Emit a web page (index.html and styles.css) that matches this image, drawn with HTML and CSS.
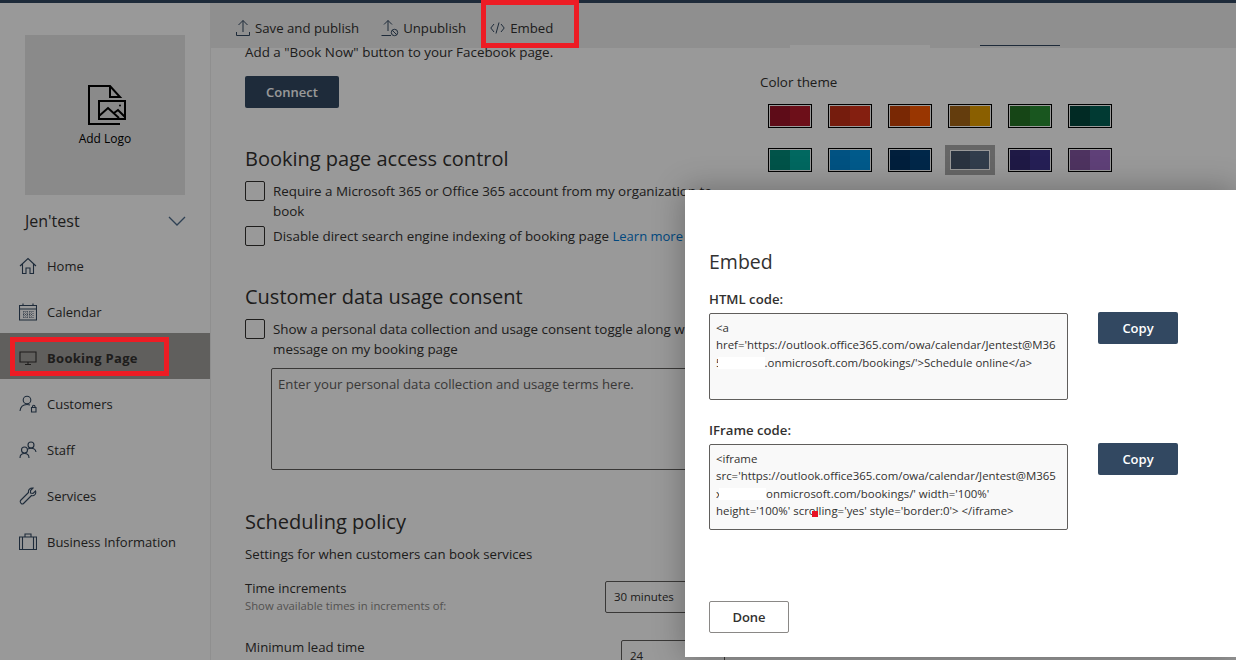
FILE: index.html
```html
<!DOCTYPE html>
<html lang="en">
<head>
    <meta charset="UTF-8">
    <title>Bookings - Booking Page</title>
    <link rel="stylesheet" href="styles.css">
</head>
<body>
    <div class="topbar"></div>
    <div class="app">
        <aside class="sidebar">
            <div class="logo-box">
                <svg class="logo-icon" width="40" height="42" viewBox="0 0 40 42" fill="none" stroke="#000" stroke-width="2">
                    <path d="M32 39H1V1H22L32 12H22V1"/>
                    <path d="M11 16H37V34H11Z" fill="#e4e4e4"/>
                    <path d="M11 31L20 23L31 33M26 28L30 25L37 32"/>
                    <circle cx="32" cy="20.500" r="1" fill="#000" stroke="none"/>
                </svg>
                <span>Add Logo</span>
            </div>
            <div class="business-name">
                <span>Jen'test</span>
                <svg width="18" height="10" viewBox="0 0 18 10" fill="none" stroke="#4d6c8c" stroke-width="1.300"><path d="M1 1L9 9L17 1"/></svg>
            </div>
            <nav class="nav">
                <a class="nav-item">
                    <svg width="18" height="18" viewBox="0 0 18 18" fill="none" stroke="#324861" stroke-width="1.100"><path d="M1 9L9 1.500L17 9M3.500 7V16.500H7V11H11V16.500H14.500V7"/></svg>
                    Home
                </a>
                <a class="nav-item">
                    <svg width="18" height="18" viewBox="0 0 18 18" fill="none" stroke="#324861" stroke-width="1.100"><path d="M.5 2.500H17.500V17H.5ZM.5 6H17.500M4 .5V3M14 .5V3"/><path d="M4 9H14M4 11.500H14M4 14H14M5 8V15M8 8V15M11 8V15M14 8V15" stroke-width=".8" stroke-dasharray="1 1"/></svg>
                    Calendar
                </a>
                <a class="nav-item active">
                    <svg width="18" height="18" viewBox="0 0 18 18" fill="none" stroke="#323130" stroke-width="1.100"><path d="M1 3H17V13H1ZM6 15.500H12M9 13V15.500"/></svg>
                    Booking Page
                </a>
                <a class="nav-item">
                    <svg width="18" height="18" viewBox="0 0 18 18" fill="none" stroke="#324861" stroke-width="1.100"><circle cx="8" cy="5" r="3.800"/><path d="M1 16C1.500 11.500 4 9.500 8 9.500C9 9.500 10 9.700 11 10"/><path d="M12.500 12.500H17V17H12.500ZM13.500 12.500V11.500C13.500 9.800 16 9.800 16 11.500V12.500"/></svg>
                    Customers
                </a>
                <a class="nav-item">
                    <svg width="18" height="18" viewBox="0 0 18 18" fill="none" stroke="#324861" stroke-width="1.100"><circle cx="12" cy="4" r="3"/><circle cx="5.500" cy="9" r="3"/><path d="M1 17C1 14 3 12.500 5.500 12.500C8 12.500 10 14 10 17M9 8C10 7.500 11 7.300 12 7.300C14.500 7.300 16.500 8.500 17 11"/></svg>
                    Staff
                </a>
                <a class="nav-item">
                    <svg width="18" height="18" viewBox="0 0 18 18" fill="none" stroke="#324861" stroke-width="1.100"><path d="M1.500 13.500L9.500 5.500C9 3 11 .5 14 1L11.500 3.500V6L14 6.500L16.500 4C17.500 7 15 9.500 12.500 8.500L4.500 16.500C3 18 .5 15.500 1.500 13.500Z"/></svg>
                    Services
                </a>
                <a class="nav-item">
                    <svg width="18" height="18" viewBox="0 0 18 18" fill="none" stroke="#324861" stroke-width="1.100"><path d="M.5 4H17.500V16.500H.5ZM6 4V1H12V4M3.500 4V16.500M14.500 4V16.500"/></svg>
                    Business Information
                </a>
            </nav>
        </aside>

        <main class="main">
            <div class="toolbar">
                <a class="tool tool-save">
                    <svg width="14" height="18" viewBox="0 0 14 18" fill="none" stroke="#324861" stroke-width="1"><path d="M7 13V1.500M2.500 6L7 1.500L11.500 6M.5 13V16.500H13.500V13"/></svg>
                    Save and publish
                </a>
                <a class="tool tool-unpublish">
                    <svg width="18" height="18" viewBox="0 0 18 18" fill="none" stroke="#324861" stroke-width="1"><path d="M7 12V1.500M3 5.500L7 1.500L11 5.500M.5 16.500H10"/><circle cx="13.500" cy="13.500" r="3.200"/><path d="M11.300 11.300L15.700 15.700"/></svg>
                    Unpublish
                </a>
                <a class="tool tool-embed">
                    <svg width="15" height="12" viewBox="0 0 15 12" fill="none" stroke="#324861" stroke-width="1"><path d="M4 2L.8 6L4 10M11 2L14.200 6L11 10M9 .5L6 11.500"/></svg>
                    Embed
                </a>
                <span class="tab-light"></span>
                <span class="tab-line"></span>
            </div>

            <div class="content">
                <div class="col-left">
                    <p class="line">Add a "Book Now" button to your Facebook page.</p>
                    <button class="btn-primary btn-connect">Connect</button>

                    <h2 class="heading heading-first">Booking page access control</h2>
                    <label class="check-row check-first"><span class="checkbox"></span><span>Require a Microsoft 365 or Office 365 account from my organization to book</span></label>
                    <label class="check-row check-second"><span class="checkbox"></span><span>Disable direct search engine indexing of booking page <a class="link">Learn more</a></span></label>

                    <h2 class="heading heading-consent">Customer data usage consent</h2>
                    <label class="check-row check-consent"><span class="checkbox"></span><span>Show a personal data collection and usage consent toggle along with a message on my booking page</span></label>
                    <div class="terms">Enter your personal data collection and usage terms here.</div>

                    <h2 class="heading heading-policy">Scheduling policy</h2>
                    <p class="line policy-note">Settings for when customers can book services</p>

                    <div class="field field-time">
                        <div class="field-label">
                            <div>Time increments</div>
                            <div class="field-sub">Show available times in increments of:</div>
                        </div>
                        <div class="select">30 minutes</div>
                    </div>
                    <div class="field field-lead">
                        <div class="field-label">Minimum lead time</div>
                        <div class="select select-lead">24</div>
                    </div>
                </div>

                <div class="col-right">
                    <div class="theme-title">Color theme</div>
                    <div class="swatches">
                        <span class="swatch"><i style="background:#9d1428"></i><i style="background:#b6192b"></i></span>
                        <span class="swatch"><i style="background:#c43017"></i><i style="background:#dc351b"></i></span>
                        <span class="swatch"><i style="background:#ca4408"></i><i style="background:#ff5a03"></i></span>
                        <span class="swatch"><i style="background:#a76716"></i><i style="background:#e69e00"></i></span>
                        <span class="swatch"><i style="background:#257325"></i><i style="background:#2b8f34"></i></span>
                        <span class="swatch"><i style="background:#02463c"></i><i style="background:#026255"></i></span>
                        <span class="swatch"><i style="background:#038a7b"></i><i style="background:#03ada0"></i></span>
                        <span class="swatch"><i style="background:#0289d9"></i><i style="background:#0096e8"></i></span>
                        <span class="swatch"><i style="background:#023464"></i><i style="background:#00417b"></i></span>
                        <span class="swatch selected"><i style="background:#46556b"></i><i style="background:#53667f"></i></span>
                        <span class="swatch"><i style="background:#342b73"></i><i style="background:#3f348e"></i></span>
                        <span class="swatch"><i style="background:#8255a0"></i><i style="background:#9e6bc8"></i></span>
                    </div>
                </div>
            </div>
        </main>
    </div>

    <div class="dim"></div>

    <div class="note-box note-embed"></div>
    <div class="note-box note-booking"></div>

    <section class="dialog">
        <h2 class="dialog-title">Embed</h2>

        <div class="code-label">HTML code:</div>
        <div class="code-row">
            <div class="code-box">&lt;a<br>href='https://outlook.office365.com/owa/calendar/Jentest@M36<br>5<span class="redact"></span>.onmicrosoft.com/bookings/'&gt;Schedule online&lt;/a&gt;</div>
            <button class="btn-primary btn-copy">Copy</button>
        </div>

        <div class="code-label code-label-second">IFrame code:</div>
        <div class="code-row">
            <div class="code-box code-box-second">&lt;iframe<br>src='https://outlook.office365.com/owa/calendar/Jentest@M365<br>x<span class="redact redact-second"></span>onmicrosoft.com/bookings/' width='100%'<br>height='100%' scrolling='yes' style='border:0'&gt; &lt;/iframe&gt;<span class="red-dot"></span></div>
            <button class="btn-primary btn-copy">Copy</button>
        </div>

        <button class="btn-done">Done</button>
    </section>
</body>
</html>
```

FILE: styles.css
```css
* {
    box-sizing: border-box;
}
html, body {
    height: 100%;
}
body {
    margin: 0;
    height: 660px;
    overflow: hidden;
    position: relative;
    font-family: "Open Sans", "Noto Sans", sans-serif;
    font-size: 13.400px;
    line-height: 20px;
    color: #323130;
    background: #fff;
}
p, h2 {
    margin: 0;
}
button {
    font-family: inherit;
}

.topbar {
    height: 3px;
    background: #324861;
}
.app {
    display: flex;
    height: 657px;
}

/* sidebar */
.sidebar {
    width: 211px;
    flex: none;
    padding-top: 32px;
    border-right: 1px solid #eee;
}
.logo-box {
    width: 160px;
    height: 160px;
    margin-left: 25px;
    background: #e6e6e6;
    display: flex;
    flex-direction: column;
    align-items: center;
    padding-top: 50px;
    font-size: 12px;
    color: #000;
}
.logo-icon {
    margin-left: 6px;
    margin-bottom: 2px;
}
.business-name {
    display: flex;
    justify-content: space-between;
    align-items: center;
    height: 24px;
    margin: 14px 24px 0 25px;
    font-size: 16px;
}
.nav {
    margin-top: 8px;
}
.nav-item {
    display: flex;
    align-items: center;
    gap: 10px;
    height: 46px;
    padding: 4px 0 0 19px;
    font-size: 13px;
    color: #323130;
}
.nav-item.active {
    background: #a19e9b;
    font-weight: 700;
    letter-spacing: 0.3px;
}

/* toolbar */
.main {
    flex: 1;
    min-width: 0;
}
.toolbar {
    display: flex;
    align-items: center;
    height: 45px;
    padding: 4px 0 0 25px;
    background: #eee;
    position: relative;
}
.tool {
    display: flex;
    align-items: center;
    gap: 5px;
    font-size: 13.200px;
    white-space: nowrap;
}
.tool-unpublish {
    margin-left: 22px;
    gap: 4px;
}
.tool-embed {
    margin-left: 24px;
    gap: 5px;
}
.tab-light {
    align-self: flex-end;
    width: 140px;
    height: 3px;
    margin-left: 237px;
    background: #fff;
}
.tab-line {
    align-self: flex-end;
    width: 80px;
    height: 1px;
    margin-left: 50px;
    margin-bottom: 2px;
    background: #324861;
}

/* page content */
.content {
    display: flex;
    margin-top: -6px;
    padding-left: 34px;
    position: relative;
}
.col-left {
    width: 515px;
    flex: none;
}
.col-right {
    padding-top: 30px;
}
.btn-primary {
    display: block;
    background: #324861;
    color: #fff;
    border: 0;
    border-radius: 2px;
    font-size: 13px;
    font-weight: 600;
}
.btn-connect {
    width: 94px;
    height: 32px;
    margin-top: 14px;
}
.heading {
    font-size: 20px;
    font-weight: 400;
    line-height: 28px;
}
.heading-first {
    margin-top: 37px;
}
.heading-consent {
    margin-top: 37px;
}
.heading-policy {
    margin-top: 38px;
}
.check-row {
    display: flex;
    gap: 8px;
    width: 480px;
}
.check-first {
    margin-top: 8px;
}
.check-second {
    margin-top: 5px;
}
.check-consent {
    margin-top: 8px;
}
.checkbox {
    width: 20px;
    height: 20px;
    flex: none;
    border: 1px solid #323130;
    border-radius: 2px;
}
.link {
    color: #0078d4;
    font-size: 13px;
}
.terms {
    height: 102px;
    margin: 9px 0 0 26px;
    padding: 5px 6px;
    border: 1px solid #605e5c;
    border-radius: 2px;
    color: #605e5c;
    font-size: 13.200px;
}
.policy-note {
    margin-top: 8px;
    font-size: 13.200px;
}
.field {
    display: flex;
    justify-content: flex-start;
    font-size: 13px;
}
.field-time {
    margin-top: 17px;
}
.field-lead {
    margin-top: 21px;
    font-size: 13.200px;
}
.field-label {
    width: 360px;
    flex: none;
    margin-top: -3px;
}
.field-lead .field-label {
    width: 376px;
    margin-top: 0;
}
.field-sub {
    margin-top: -2px;
    font-size: 11.300px;
    color: #8a8886;
}
.select {
    width: 120px;
    height: 32px;
    padding: 5px 8px;
    border: 1px solid #605e5c;
    border-radius: 2px;
    font-size: 11.500px;
}
.select-lead {
    width: 104px;
    margin-top: 3px;
}

/* colour theme */
.theme-title {
    line-height: 20px;
}
.swatches {
    display: grid;
    grid-template-columns: repeat(6, 44px);
    grid-auto-rows: 24px;
    column-gap: 16px;
    row-gap: 20px;
    margin: 12px 0 0 8px;
}
.swatch {
    display: flex;
    padding: 1px;
    border: 1px solid #000;
    background: #fff;
    position: relative;
}
.swatch i {
    flex: 1;
}
.swatch.selected {
    margin: 2px;
    padding: 0;
    border: 1px solid #fff;
    outline: 5px solid #aaa;
}

/* modal */
.dim {
    position: absolute;
    inset: 0;
    background: rgba(0, 0, 0, 0.4);
}
.dialog {
    position: absolute;
    left: 685px;
    top: 190px;
    width: 551px;
    height: 467px;
    padding: 58px 0 0 24px;
    background: #fff;
    box-shadow: 0 0 30px rgba(0, 0, 0, 0.3);
}
.dialog-title {
    font-size: 19.500px;
    font-weight: 400;
    line-height: 28px;
}
.code-label {
    margin-top: 13px;
    font-size: 13.200px;
    font-weight: 600;
}
.code-label-second {
    margin-top: 20px;
}
.code-row {
    display: flex;
    gap: 30px;
    margin-top: 4px;
}
.code-box {
    width: 359px;
    height: 87px;
    padding: 5px 6px;
    background: #f9f9f9;
    border: 1px solid #605e5c;
    border-radius: 2px;
    font-size: 11.450px;
    line-height: 17.300px;
    white-space: nowrap;
    position: relative;
}
.code-box-second {
    height: 86px;
}
.redact {
    display: inline-block;
    width: 47px;
    height: 12px;
    margin-left: -5px;
    background: #fff;
    vertical-align: -2px;
}
.redact-second {
    margin-left: -3px;
}
.red-dot {
    position: absolute;
    left: 102px;
    top: 66px;
    width: 6px;
    height: 6px;
    background: #e81123;
}
.btn-copy {
    width: 80px;
    height: 32px;
    margin-top: -1px;
    flex: none;
}
.btn-done {
    display: block;
    width: 80px;
    height: 32px;
    margin-top: 71px;
    background: #fff;
    border: 1px solid #8a8886;
    border-radius: 2px;
    font-size: 13px;
    font-weight: 600;
    color: #323130;
}

/* red annotations on the screenshot */
.note-box {
    position: absolute;
    border: 5px solid #ed1c24;
}
.note-embed {
    left: 481px;
    top: 0;
    width: 98px;
    height: 48px;
}
.note-booking {
    left: 10px;
    top: 337px;
    width: 159px;
    height: 39px;
}
```
